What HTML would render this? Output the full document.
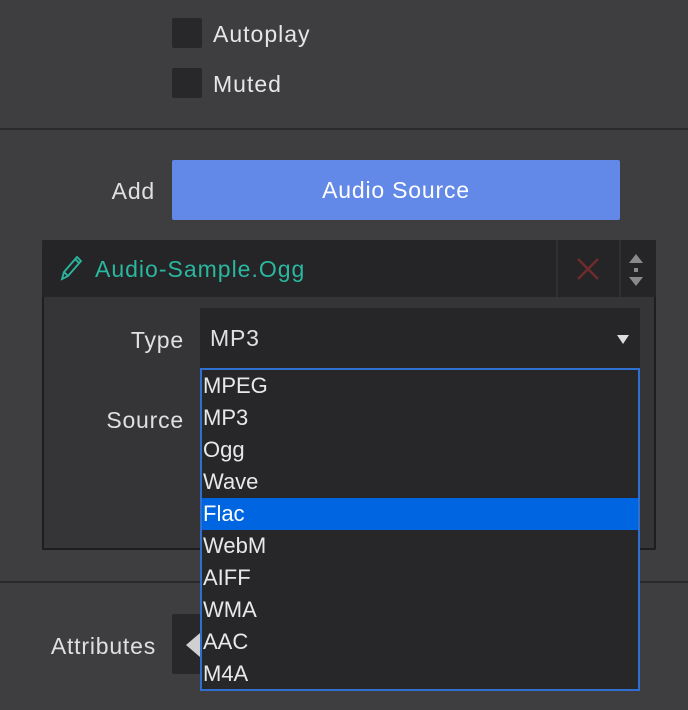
<!DOCTYPE html>
<html><head><meta charset="utf-8"><style>
*{margin:0;padding:0;box-sizing:border-box}
body{width:688px;height:710px;background:#3e3e40;font-family:"Liberation Sans",sans-serif;color:#e6e6e6;position:relative;overflow:hidden}
.a{position:absolute}
.cb{width:30px;height:30px;background:#28282a;border-radius:2px}
.t{font-size:23px;line-height:26px;letter-spacing:1px}
.lbl{font-size:23px;color:#e0e0e0;letter-spacing:0.8px;text-align:right;width:200px}
.it{position:absolute;left:1px;font-size:22px;color:#e8e8e8;height:32px;line-height:32px}
</style></head><body>
<div class="a cb" style="left:172px;top:18px"></div>
<div class="a t" style="left:213px;top:21px">Autoplay</div>
<div class="a cb" style="left:172px;top:68px"></div>
<div class="a t" style="left:213px;top:71px">Muted</div>
<div class="a" style="left:0;top:128px;width:688px;height:2px;background:#2a2a2b"></div>

<div class="a lbl" style="right:533px;top:178px">Add</div>
<div class="a" style="left:172px;top:160px;width:448px;height:60px;background:#6289e8;border-radius:2px;color:#fff;font-size:23px;letter-spacing:0.8px;line-height:60px;text-align:center">Audio Source</div>

<div class="a" style="left:42px;top:240px;width:614px;height:310px;background:#353537;border:2px solid #1e1e20;border-top:none;border-radius:2px"></div>
<div class="a" style="left:42px;top:240px;width:614px;height:57px;background:#252527;border-radius:2px 2px 0 0"></div>
<div class="a" style="left:556px;top:240px;width:2px;height:57px;background:#303032"></div>
<div class="a" style="left:619px;top:240px;width:2px;height:57px;background:#303032"></div>
<svg class="a" style="left:58px;top:253px" width="26" height="30" viewBox="0 0 26 30"><path d="M4 26 L6 19 L19 4 L23 8 L10 23 Z M6 19 L10 23 M17 6 L21 10" fill="none" stroke="#2ab7a0" stroke-width="1.8"/></svg>
<div class="a" style="left:95px;top:256px;font-size:23px;letter-spacing:1px;color:#2ab7a0">Audio-Sample.Ogg</div>
<svg class="a" style="left:576px;top:257px" width="24" height="24"><path d="M2 2L22 22M22 2L2 22" stroke="#6e2c2c" stroke-width="2.5"/></svg>
<svg class="a" style="left:628px;top:253px" width="16" height="34"><path d="M1 10L8 1L15 10Z M1 24L8 33L15 24Z" fill="#8a8a8a"/><rect x="6" y="15" width="4" height="4" fill="#8a8a8a"/></svg>

<div class="a lbl" style="right:504px;top:327px">Type</div>
<div class="a lbl" style="right:504px;top:407px">Source</div>
<div class="a" style="left:200px;top:308px;width:440px;height:62px;background:#262628;border-radius:2px"></div>
<div class="a" style="left:210px;top:325px;font-size:23px;letter-spacing:0.8px;color:#e0e0e0">MP3</div>
<svg class="a" style="left:617px;top:335px" width="12" height="9"><path d="M0 0H12L6 9Z" fill="#ddd"/></svg>

<div class="a" style="left:200px;top:368px;width:440px;height:323px;background:#27272a;border:2px solid #2f6fd0">
<div class="it" style="top:0">MPEG</div>
<div class="it" style="top:32px">MP3</div>
<div class="it" style="top:64px">Ogg</div>
<div class="it" style="top:96px">Wave</div>
<div class="it" style="top:128px;left:0;width:436px;padding-left:1px;background:#0065e0;color:#fff">Flac</div>
<div class="it" style="top:160px">WebM</div>
<div class="it" style="top:192px">AIFF</div>
<div class="it" style="top:224px">WMA</div>
<div class="it" style="top:256px">AAC</div>
<div class="it" style="top:288px">M4A</div>
</div>

<div class="a" style="left:0;top:581px;width:200px;height:2px;background:#2a2a2b"></div>
<div class="a" style="left:640px;top:581px;width:48px;height:2px;background:#2a2a2b"></div>
<div class="a lbl" style="right:532px;top:633px">Attributes</div>
<div class="a" style="left:172px;top:614px;width:28px;height:60px;background:#28282a;border-radius:2px 0 0 2px"></div>
<svg class="a" style="left:186px;top:633px" width="14" height="24"><path d="M14 0L14 24L0 12Z" fill="#d0d0d0"/></svg>
</body></html>
